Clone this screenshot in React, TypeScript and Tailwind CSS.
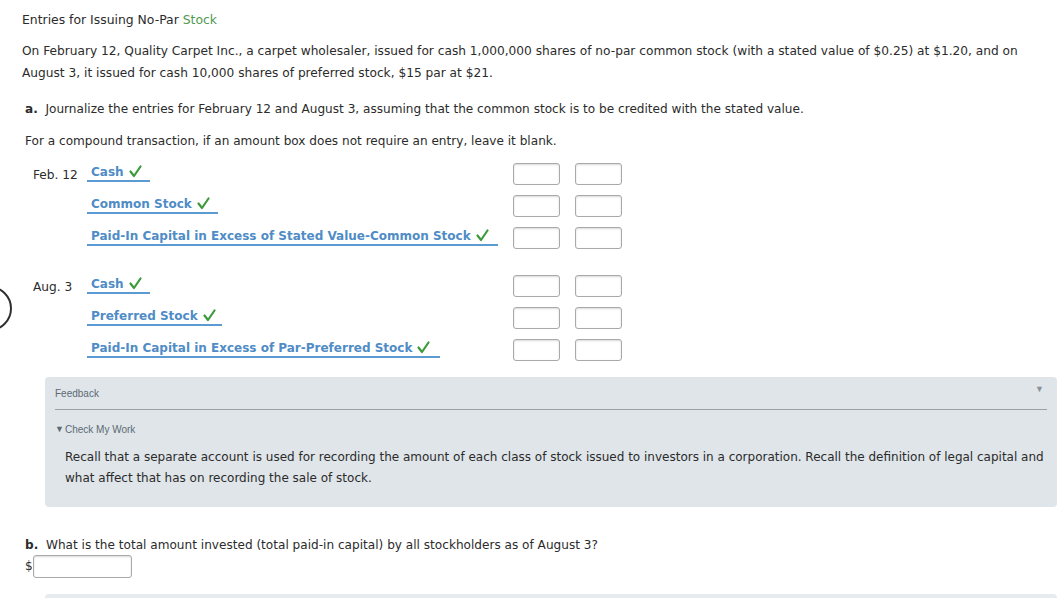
import React from "react";

const V = { fontFamily: '"DejaVu Sans", Verdana, sans-serif' };
const H = { fontFamily: '"Liberation Sans", Arial, sans-serif' };

type Entry = { date?: string; account: string; width: number };

const FEB: Entry[] = [
  { date: "Feb. 12", account: "Cash", width: 63 },
  { account: "Common Stock", width: 131 },
  { account: "Paid-In Capital in Excess of Stated Value-Common Stock", width: 411 },
];

const AUG: Entry[] = [
  { date: "Aug. 3", account: "Cash", width: 63 },
  { account: "Preferred Stock", width: 135 },
  { account: "Paid-In Capital in Excess of Par-Preferred Stock", width: 353 },
];

function Check() {
  return (
    <svg width="13" height="13" viewBox="0 0 13 13" className="ml-[5px] shrink-0">
      <path d="M1.5 6.5 L5 11 L11.5 1.5" fill="none" stroke="#3c9b3c" strokeWidth="2.2" strokeLinecap="round" strokeLinejoin="round" />
    </svg>
  );
}

function Amount() {
  return (
    <div className="w-[47px] h-[22px] rounded-[3px] border border-[#a9a9a9] bg-white shadow-[inset_0_1px_2px_rgba(0,0,0,0.15)]" />
  );
}

function JournalRow({ e }: { e: Entry }) {
  return (
    <div className="flex h-[32px] items-start">
      <div className="w-[65px] whitespace-nowrap pl-[11px] pt-[4px] text-[12.2px] text-[#2b2b2b]" style={V}>
        {e.date}
      </div>
      <div className="w-[426px]">
        <div
          className="flex h-[20px] items-center border-b-2 border-[#5b9bd1] pl-[4px] pt-[1px] text-[12px] font-bold text-[#4f8cc6]"
          style={{ ...V, width: e.width }}
        >
          <span className="whitespace-nowrap">{e.account}</span>
          <Check />
        </div>
      </div>
      <div className="flex gap-[15px] pt-[1px]">
        <Amount />
        <Amount />
      </div>
    </div>
  );
}

export default function App() {
  return (
    <div className="relative h-[598px] overflow-hidden bg-white pl-[22px] text-[#2b2b2b]" style={V}>
      {/* partially visible circle on left edge */}
      <div className="absolute left-[-33px] top-[286px] h-[45px] w-[45px] rounded-full border-[2.5px] border-[#2f2f2f]" />

      <div className="pt-[10px] text-[12.4px] leading-[20px]">
        Entries for Issuing No-Par <span className="text-[#4f9a4f]">Stock</span>
      </div>

      <p className="mt-[10px] w-[1035px] text-[12.2px] leading-[22px]">
        On February 12, Quality Carpet Inc., a carpet wholesaler, issued for cash 1,000,000 shares of no-par common stock (with a stated value of $0.25) at $1.20, and on August 3, it issued for cash 10,000 shares of preferred stock, $15 par at $21.
      </p>

      <div className="mt-[15px] pl-[3px] text-[12.1px] leading-[20px]">
        <b>a.</b>&nbsp; Journalize the entries for February 12 and August 3, assuming that the common stock is to be credited with the stated value.
      </div>

      <div className="mt-[12px] pl-[3px] text-[12.1px] leading-[20px]">
        For a compound transaction, if an amount box does not require an entry, leave it blank.
      </div>

      <div className="mt-[11px]">
        {FEB.map((e) => (
          <JournalRow key={e.account} e={e} />
        ))}
      </div>
      <div className="mt-[16px]">
        {AUG.map((e) => (
          <JournalRow key={e.account + "a"} e={e} />
        ))}
      </div>

      <div className="mr-[6px] ml-[23px] mt-[7px] h-[130px] rounded-[4px] bg-[#dfe5e9] px-[10px]">
        <div className="relative flex h-[33px] items-center border-b border-[#9aa2a8] pt-[1px] text-[10px] text-[#5d6a73]" style={H}>
          Feedback
          <span className="absolute right-[3px] top-[6px] text-[9px] text-[#8a9298]">▼</span>
        </div>
        <div className="mt-[12px] flex items-center text-[10px] text-[#5d6a73]" style={H}>
          <span className="mr-[1px] text-[9px] leading-none">▼</span>Check My Work
        </div>
        <p className="mt-[10px] pl-[10px] text-[12px] leading-[21px] text-[#2b2b2b]">
          Recall that a separate account is used for recording the amount of each class of stock issued to investors in a corporation. Recall the definition of legal capital and what affect that has on recording the sale of stock.
        </p>
      </div>

      <div className="mt-[28px] pl-[3px] text-[12.1px] leading-[20px]">
        <b>b.</b>&nbsp; What is the total amount invested (total paid-in capital) by all stockholders as of August 3?
      </div>
      <div className="flex items-center pl-[3px]">
        <span className="text-[12.1px]">$</span>
        <div className="h-[23px] w-[99px] rounded-[3px] border border-[#a9a9a9] bg-white shadow-[inset_0_1px_2px_rgba(0,0,0,0.15)]" />
      </div>

      <div className="mr-[6px] ml-[23px] mt-[16px] h-[40px] rounded-[4px] bg-[#e6ebee]" />
    </div>
  );
}
